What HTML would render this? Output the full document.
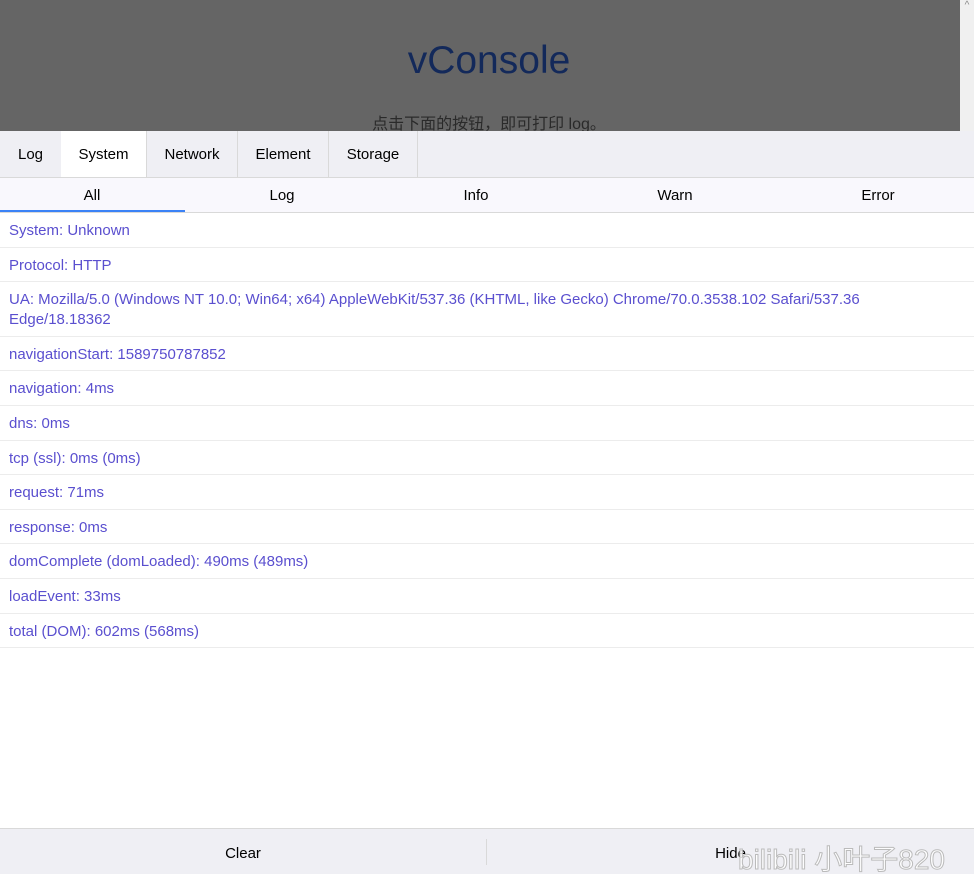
<!DOCTYPE html>
<html><head><meta charset="utf-8"><style>
*{margin:0;padding:0;box-sizing:border-box}
body{width:974px;height:874px;overflow:hidden;font-family:"Liberation Sans","Noto Sans CJK SC",sans-serif;background:#fff;position:relative}
.top{position:absolute;left:0;top:0;width:960px;height:131px;background:#656565;overflow:hidden}
.sb{position:absolute;left:960px;top:0;width:14px;height:131px;background:#f0f0f0;color:#888;font-size:10px;text-align:center}
.title{position:absolute;top:39px;width:978px;text-align:center;font-size:39px;color:#13295a}
.sub{position:absolute;top:110px;width:978px;text-align:center;font-size:16px;color:#2a2a2a}
.tabs{position:absolute;top:131px;left:0;width:974px;height:47px;background:#efeff4;border-bottom:1px solid #d9d9d9}
.tab{position:absolute;top:0;height:46px;line-height:46px;padding-top:1px;text-align:center;font-size:15px;color:#000;border-right:1px solid #d9d9d9}
.subs{position:absolute;top:178px;left:0;width:974px;height:35px;background:#f9f8fd;border-bottom:1px solid #d9d9d9}
.st{position:absolute;top:1px;line-height:34px;font-size:15px;transform:translateX(-50%)}
.ul{position:absolute;left:0;top:210px;width:185px;height:2px;background:#3b82f6}
.list{position:absolute;top:213px;left:0;width:974px}
.row{padding:8px 9px 5.6px;font-size:15px;line-height:20px;color:#5a4fcf;border-bottom:1px solid #ececec}
.foot{position:absolute;top:828px;left:0;width:974px;height:46px;background:#efeff4;border-top:1px solid #d9d9d9}
.fb{position:absolute;top:0;width:487px;line-height:46px;text-align:center;font-size:15px}
.wm{position:absolute;left:738px;top:838px;font-size:28px;white-space:nowrap;color:rgba(255,255,255,.85);-webkit-text-stroke:1px #bbb;letter-spacing:0px}
</style></head><body>
<div class="top"><div class="title">vConsole</div><div class="sub">点击下面的按钮，即可打印 log。</div></div>
<div class="sb">^</div>
<div class="tabs">
<div class="tab" style="left:0;width:61px;border-right:none">Log</div>
<div class="tab" style="left:61px;width:86px;background:#fff">System</div>
<div class="tab" style="left:147px;width:91px">Network</div>
<div class="tab" style="left:238px;width:91px">Element</div>
<div class="tab" style="left:329px;width:89px">Storage</div>
</div>
<div class="subs">
<div class="st" style="left:92px">All</div>
<div class="st" style="left:282px">Log</div>
<div class="st" style="left:476px">Info</div>
<div class="st" style="left:675px">Warn</div>
<div class="st" style="left:878px">Error</div>
</div>
<div class="ul"></div>
<div class="list">
<div class="row">System: Unknown</div>
<div class="row">Protocol: HTTP</div>
<div class="row">UA: Mozilla/5.0 (Windows NT 10.0; Win64; x64) AppleWebKit/537.36 (KHTML, like Gecko) Chrome/70.0.3538.102 Safari/537.36 Edge/18.18362</div>
<div class="row">navigationStart: 1589750787852</div>
<div class="row">navigation: 4ms</div>
<div class="row">dns: 0ms</div>
<div class="row">tcp (ssl): 0ms (0ms)</div>
<div class="row">request: 71ms</div>
<div class="row">response: 0ms</div>
<div class="row">domComplete (domLoaded): 490ms (489ms)</div>
<div class="row">loadEvent: 33ms</div>
<div class="row">total (DOM): 602ms (568ms)</div>
</div>
<div class="foot">
<div class="fb" style="left:0;border-right:1px solid #d9d9d9;height:26px;top:10px;line-height:26px;padding-top:2px">Clear</div>
<div class="fb" style="left:487px;padding-top:2px">Hide</div>
</div>
<div class="wm">bilibili 小叶子820</div>
</body></html>
